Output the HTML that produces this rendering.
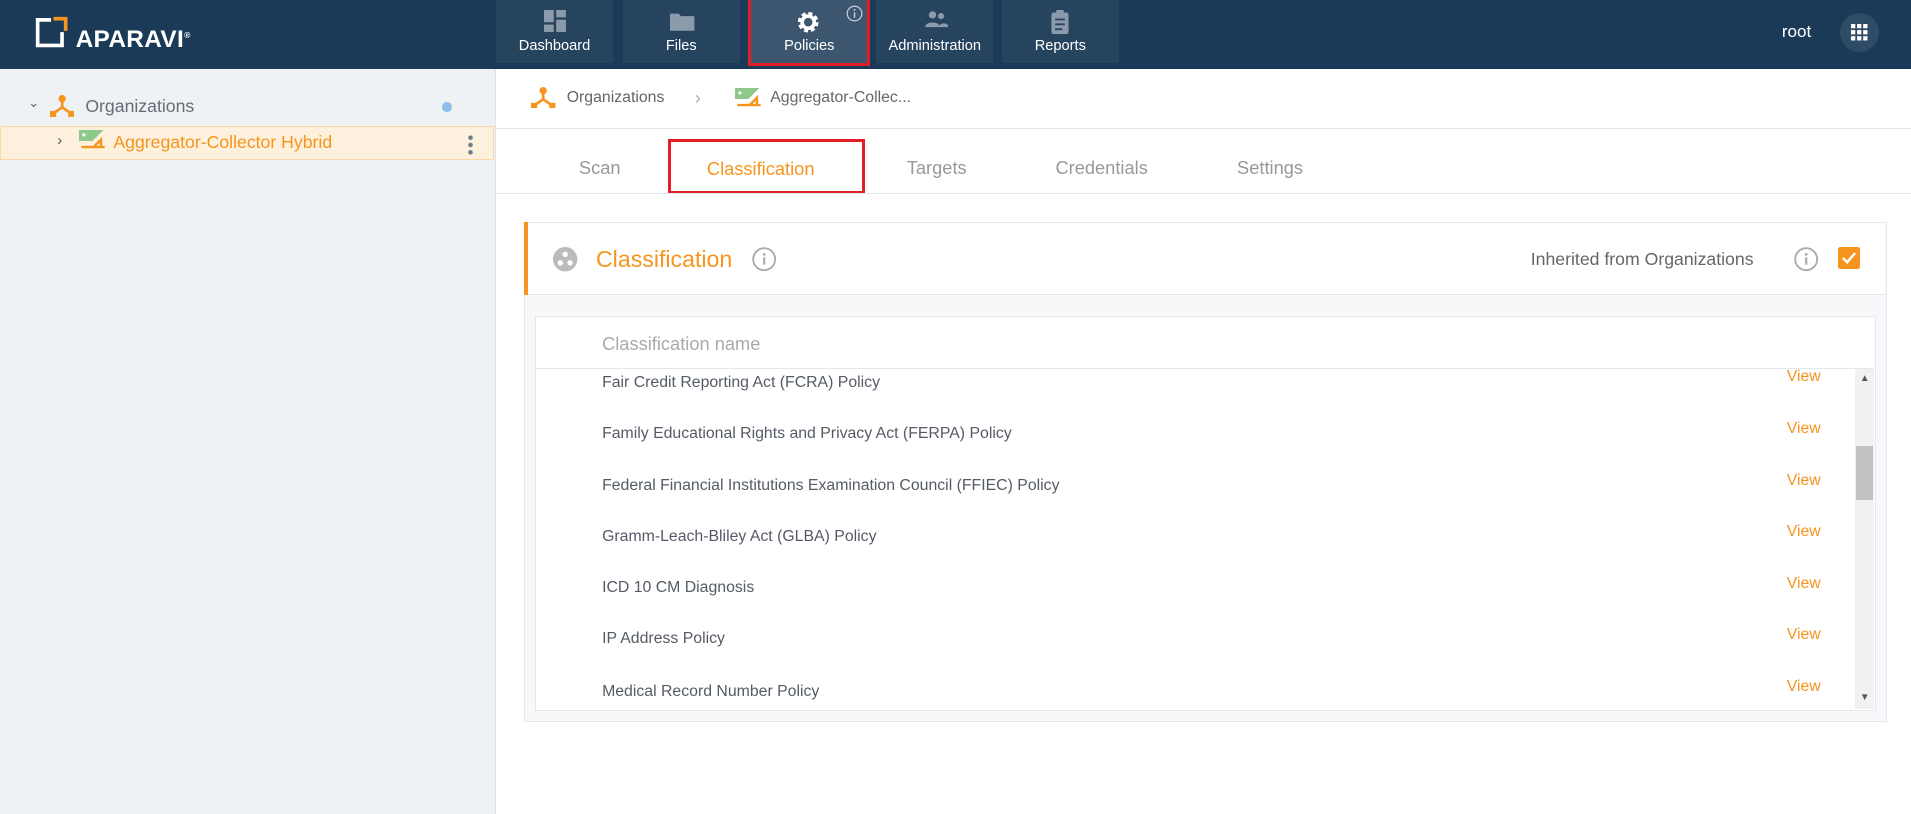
<!DOCTYPE html>
<html><head><meta charset="utf-8"><style>
html,body{margin:0;padding:0;width:1911px;height:814px;overflow:hidden;background:#fff}
#w{zoom:1.21875;width:1568px;height:668px;position:relative;font-family:"Liberation Sans",sans-serif;overflow:hidden}
.a{position:absolute}
.hdr{left:0;top:0;width:1568px;height:57px;background:#1b3a57}
.tile{top:0;width:96px;height:52px;background:#27445f;color:#fff;font-size:12px;text-align:center}
.tile span{position:absolute;left:0;right:0;top:31px}
.tile svg{position:absolute;left:39px;top:8px}
.side{left:0;top:57px;width:406px;height:611px;background:#eef2f5;border-right:1px solid #dde3e8}
.t{white-space:nowrap}
.row{left:494px;font-size:13px;color:#555b66}
.view{left:1466px;font-size:13px;color:#f7941d}
</style></head><body><div id="w">
<div class="a hdr"></div>
<svg class="a" style="left:28px;top:12px" width="30" height="28" viewBox="0 0 30 28"><path d="M14 4H3v21h20V14" fill="none" stroke="#fff" stroke-width="3"/><path d="M16 3h10v10" fill="none" stroke="#f7941d" stroke-width="3"/></svg>
<div class="a t" style="left:62px;top:21px;color:#fff;font-size:20px;font-weight:bold;letter-spacing:0.3px">APARAVI<sup style="font-size:7px">®</sup></div>
<div class="a tile" style="left:407px"><svg width="18" height="18"><rect x="0" y="0" width="8" height="10" fill="#8b9bab"/><rect x="10" y="0" width="8" height="6" fill="#8b9bab"/><rect x="10" y="8" width="8" height="10" fill="#8b9bab"/><rect x="0" y="12" width="8" height="6" fill="#8b9bab"/></svg><span>Dashboard</span></div>
<div class="a tile" style="left:511px"><svg width="20" height="18"><path d="M0 3h7l2 2h11v12H0z" fill="#8b9bab"/></svg><span>Files</span></div>
<div class="a tile" style="background:#3b566e;height:54px;box-sizing:border-box;border:3px solid #e41e26;border-top:none;width:100px;left:614px"><svg width="20" height="20" viewBox="0 0 20 20" style="left:37px"><circle cx="10" cy="10" r="6.5" fill="none" stroke="#fff" stroke-width="4" stroke-dasharray="3 2.1"/><circle cx="10" cy="10" r="5" fill="none" stroke="#fff" stroke-width="3"/></svg><span>Policies</span><svg width="14" height="14" style="left:78px;top:4px"><circle cx="7" cy="7" r="6" fill="none" stroke="#ccd" stroke-width="1"/><rect x="6.4" y="6" width="1.2" height="4.5" fill="#ccd"/><circle cx="7" cy="4" r=".8" fill="#ccd"/></svg></div>
<div class="a tile" style="left:719px"><svg width="20" height="16"><circle cx="7" cy="4" r="3" fill="#8b9bab"/><circle cx="14" cy="5" r="2.5" fill="#8b9bab"/><path d="M1 14c0-5 12-5 12 0zM12 14c1-4 8-4 8 0z" fill="#8b9bab"/></svg><span>Administration</span></div>
<div class="a tile" style="left:822px"><svg width="18" height="20"><rect x="2" y="2" width="14" height="18" rx="2" fill="#8b9bab"/><rect x="6" y="0" width="6" height="4" fill="#8b9bab"/><rect x="5" y="7" width="8" height="1.5" fill="#27445f"/><rect x="5" y="11" width="8" height="1.5" fill="#27445f"/><rect x="5" y="15" width="6" height="1.5" fill="#27445f"/></svg><span>Reports</span></div>
<div class="a t" style="left:1462px;top:18px;color:#fff;font-size:14px">root</div>
<div class="a" style="left:1510px;top:11px;width:32px;height:32px;border-radius:16px;background:#2f4c66"><svg class="a" style="left:9px;top:9px" width="14" height="14"><g fill="#fff"><rect x="0" y="0" width="3.5" height="3.5"/><rect x="5" y="0" width="3.5" height="3.5"/><rect x="10" y="0" width="3.5" height="3.5"/><rect x="0" y="5" width="3.5" height="3.5"/><rect x="5" y="5" width="3.5" height="3.5"/><rect x="10" y="5" width="3.5" height="3.5"/><rect x="0" y="10" width="3.5" height="3.5"/><rect x="5" y="10" width="3.5" height="3.5"/><rect x="10" y="10" width="3.5" height="3.5"/></g></svg></div>

<div class="a side"></div>
<div class="a t" style="left:23px;top:78px;color:#666;font-size:11px">⌄</div>
<svg class="a" style="left:41px;top:78px" width="20" height="18"><circle cx="10" cy="3" r="3" fill="#f7941d"/><path d="M10 5v5L3 15M10 10l7 5" stroke="#f7941d" stroke-width="2.2" fill="none"/><rect x="0" y="13" width="5" height="5" fill="#f7941d"/><rect x="15" y="13" width="5" height="5" fill="#f7941d"/></svg>
<div class="a t" style="left:70px;top:79px;color:#666c75;font-size:14.5px">Organizations</div>
<div class="a" style="left:363px;top:84px;width:8px;height:8px;border-radius:4px;background:#8dbde8"></div>
<div class="a" style="left:0;top:103px;width:404px;height:27px;background:#fdf0dc;border:1px solid #fbd9a5"></div>
<div class="a t" style="left:47px;top:109px;color:#555;font-size:12px">›</div>
<svg class="a" style="left:65px;top:107px" width="22" height="16"><path d="M0 0h20l-9 9H0z" fill="#8ec98b"/><path d="M2 14h19M12 14l6-6v6" stroke="#f7941d" stroke-width="2" fill="none"/><circle cx="4" cy="4" r="1.3" fill="#fff"/></svg>
<div class="a t" style="left:93px;top:108px;color:#f7941d;font-size:14.5px">Aggregator-Collector Hybrid</div>
<div class="a" style="left:384px;top:110px;width:4px;height:17px;background:radial-gradient(circle,#6b7c8c 1.7px,transparent 2px) 0 0/4px 6px"></div>

<svg class="a" style="left:436px;top:71px" width="20" height="18"><circle cx="10" cy="3" r="3" fill="#f7941d"/><path d="M10 5v5L3 15M10 10l7 5" stroke="#f7941d" stroke-width="2.2" fill="none"/><rect x="0" y="13" width="5" height="5" fill="#f7941d"/><rect x="15" y="13" width="5" height="5" fill="#f7941d"/></svg>
<div class="a t" style="left:465px;top:73px;color:#666;font-size:13px">Organizations</div>
<div class="a t" style="left:570px;top:71px;color:#aab;font-size:15px">›</div>
<svg class="a" style="left:603px;top:72px" width="22" height="16"><path d="M0 0h20l-9 9H0z" fill="#8ec98b"/><path d="M2 14h19M12 14l6-6v6" stroke="#f7941d" stroke-width="2" fill="none"/><circle cx="4" cy="4" r="1.3" fill="#fff"/></svg>
<div class="a t" style="left:632px;top:73px;color:#666;font-size:13px">Aggregator-Collec...</div>
<div class="a" style="left:407px;top:105px;width:1161px;height:1px;background:#e3e8ec"></div>
<div class="a t" style="left:475px;top:129px;color:#999;font-size:15px">Scan</div>
<div class="a" style="left:548px;top:114px;width:157px;height:40px;border:3px solid #e41e26"></div>
<div class="a t" style="left:580px;top:130px;color:#f7941d;font-size:15px">Classification</div>
<div class="a t" style="left:744px;top:129px;color:#999;font-size:15px">Targets</div>
<div class="a t" style="left:866px;top:129px;color:#999;font-size:15px">Credentials</div>
<div class="a t" style="left:1015px;top:129px;color:#999;font-size:15px">Settings</div>
<div class="a" style="left:407px;top:158px;width:1161px;height:1px;background:#e3e8ec"></div>

<div class="a" style="left:430px;top:182px;width:1117px;height:409px;border:1px solid #e3e8ec;background:#f7f8fa"></div>
<div class="a" style="left:431px;top:183px;width:1116px;height:58px;background:#fff;border-bottom:1px solid #e3e8ec"></div>
<div class="a" style="left:430px;top:182px;width:3px;height:60px;background:#f7941d"></div>
<svg class="a" style="left:454px;top:203px" width="20" height="20"><circle cx="10" cy="10" r="10" fill="#bbb"/><circle cx="10" cy="6" r="2.2" fill="#fff"/><circle cx="6" cy="13" r="2.2" fill="#fff"/><circle cx="14" cy="13" r="2.2" fill="#fff"/></svg>
<div class="a t" style="left:489px;top:202px;color:#f7941d;font-size:19px">Classification</div>
<svg class="a" style="left:617px;top:203px" width="20" height="20"><circle cx="10" cy="10" r="9" fill="none" stroke="#aaa" stroke-width="1.5"/><rect x="9.1" y="8.5" width="1.8" height="6" fill="#aaa"/><circle cx="10" cy="6" r="1.1" fill="#aaa"/></svg>
<div class="a t" style="left:1256px;top:204px;color:#666;font-size:14.5px">Inherited from Organizations</div>
<svg class="a" style="left:1472px;top:203px" width="20" height="20"><circle cx="10" cy="10" r="9" fill="none" stroke="#aaa" stroke-width="1.5"/><rect x="9.1" y="8.5" width="1.8" height="6" fill="#aaa"/><circle cx="10" cy="6" r="1.1" fill="#aaa"/></svg>
<div class="a" style="left:1508px;top:203px;width:18px;height:18px;background:#f7941d;border-radius:2px"><svg width="18" height="18"><path d="M4 9l3.5 3.5L14 5" stroke="#fff" stroke-width="2" fill="none"/></svg></div>

<div class="a" style="left:439px;top:259px;width:1099px;height:323px;background:#fff;border:1px solid #e3e8ec"></div>
<div class="a" style="left:440px;top:302px;width:1098px;height:1px;background:#e3e8ec"></div>
<div class="a t" style="left:494px;top:273px;color:#aaa;font-size:15px">Classification name</div>
<div class="a" style="left:1522px;top:303px;width:16px;height:279px;background:#f1f1f1"></div>
<div class="a" style="left:1523px;top:366px;width:14px;height:44px;background:#c1c1c1"></div>
<div class="a t" style="left:1526px;top:306px;font-size:8px;color:#555">▲</div>
<div class="a t" style="left:1526px;top:568px;font-size:8px;color:#555">▼</div>
<div class="a t row" style="top:307px">Fair Credit Reporting Act (FCRA) Policy</div>
<div class="a t row" style="top:349px">Family Educational Rights and Privacy Act (FERPA) Policy</div>
<div class="a t row" style="top:391px">Federal Financial Institutions Examination Council (FFIEC) Policy</div>
<div class="a t row" style="top:433px">Gramm-Leach-Bliley Act (GLBA) Policy</div>
<div class="a t row" style="top:475px">ICD 10 CM Diagnosis</div>
<div class="a t row" style="top:517px">IP Address Policy</div>
<div class="a t row" style="top:560px">Medical Record Number Policy</div>
<div class="a t view" style="top:302px">View</div>
<div class="a t view" style="top:345px">View</div>
<div class="a t view" style="top:387px">View</div>
<div class="a t view" style="top:429px">View</div>
<div class="a t view" style="top:472px">View</div>
<div class="a t view" style="top:514px">View</div>
<div class="a t view" style="top:556px">View</div>
</div></body></html>
